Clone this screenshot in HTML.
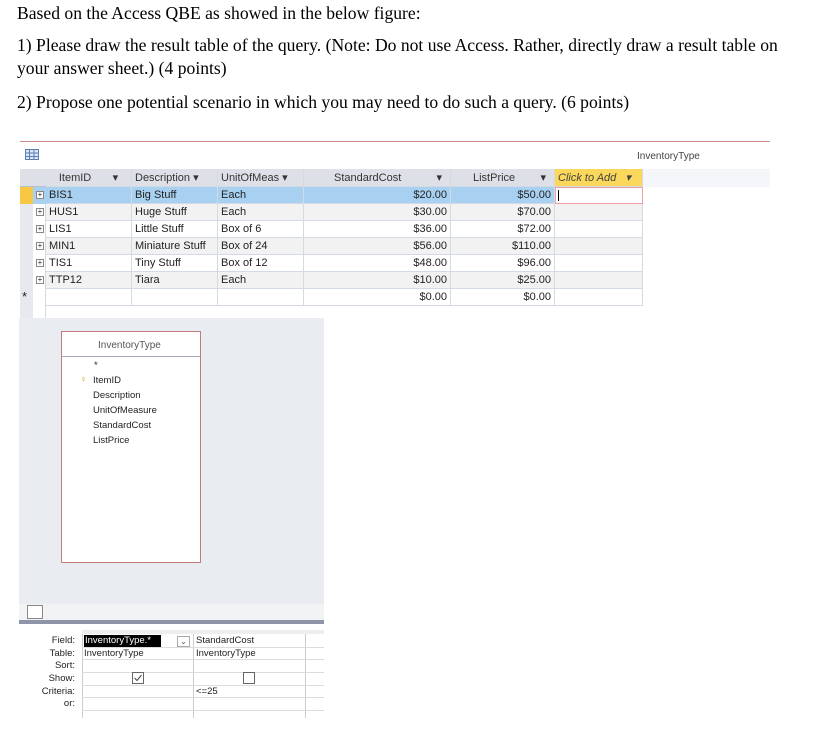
<!DOCTYPE html>
<html><head><meta charset="utf-8"><style>
*{margin:0;padding:0;box-sizing:border-box}
body{width:827px;height:734px;background:#fff;position:relative;overflow:hidden;font-family:"Liberation Sans",sans-serif}
.t{position:absolute;left:17px;font-family:"Liberation Serif",serif;font-size:17.6px;color:#000;white-space:nowrap}
.a{position:absolute;white-space:nowrap;font-size:11px;color:#222}
.c{position:absolute;height:17px;line-height:17px;font-size:11px;color:#222;padding:0 3px;white-space:nowrap;overflow:hidden;border-right:1px solid #d4dae3;border-bottom:1px solid #d4dae3}
.r{text-align:right}
.ex{position:absolute;width:8px;height:8px;border:1px solid #888;font-size:8px;line-height:6px;text-align:center;color:#333;background:#fff}
.q{position:absolute;font-size:9.5px;color:#222;white-space:nowrap}
</style></head><body>
<div class="t" style="top:3px">Based on the Access QBE as showed in the below figure:</div>
<div class="t" style="top:35px">1) Please draw the result table of the query. (Note: Do not use Access. Rather, directly draw a result table on</div>
<div class="t" style="top:58px">your answer sheet.) (4 points)</div>
<div class="t" style="top:92px">2) Propose one potential scenario in which you may need to do such a query. (6 points)</div>

<div style="position:absolute;left:20px;top:141px;width:750px;height:1px;background:#c98a8a"></div>
<svg style="position:absolute;left:25px;top:149px" width="14" height="11"><rect x="0.5" y="0.5" width="13" height="10" fill="#dbe6f5" stroke="#5b7fb5"/><path d="M0 4H14M0 7.5H14M4.5 1V11M9 1V11" stroke="#5b7fb5"/></svg>
<div class="a" style="left:637px;top:151px;font-size:10px;color:#444">InventoryType</div>

<div style="position:absolute;left:20px;top:169px;width:750px;height:18px;background:#f4f6fa"></div>
<div style="position:absolute;left:20px;top:169px;width:622px;height:18px;background:#dde1e7;border-bottom:1px solid #b8c0cc"></div>
<div class="c" style="left:46px;top:169px;width:86px;text-align:center;height:18px;line-height:18px;color:#333">ItemID&nbsp;&nbsp;&nbsp;&nbsp;&nbsp;&nbsp;&nbsp;▾</div>
<div class="c" style="left:132px;top:169px;width:86px;height:18px;line-height:18px;color:#333">Description ▾</div>
<div class="c" style="left:218px;top:169px;width:86px;height:18px;line-height:18px;color:#333">UnitOfMeas ▾</div>
<div class="c" style="left:304px;top:169px;width:147px;height:18px;line-height:18px;color:#333;padding-left:30px">StandardCost<span style="position:absolute;right:8px">▾</span></div>
<div class="c" style="left:451px;top:169px;width:104px;height:18px;line-height:18px;color:#333;padding-left:22px">ListPrice<span style="position:absolute;right:8px">▾</span></div>
<div class="c" style="left:555px;top:169px;width:88px;height:18px;line-height:18px;background:#fbd75b;font-style:italic;color:#444">Click to Add&nbsp;&nbsp; ▾</div>

<div style="position:absolute;left:20px;top:187px;width:13px;height:17px;background:#f8c844"></div>
<div style="position:absolute;left:20px;top:204px;width:13px;height:118px;background:#e6e9ee"></div>
<div style="position:absolute;left:33px;top:187px;width:609px;height:17px;background:#a8d0f1"></div>
<div style="position:absolute;left:33px;top:204px;width:13px;height:118px;background:#fff;border-right:1px solid #d4dae3"></div>

<div id="rows"></div>
<div class="a" style="left:22px;top:289px;font-size:13px">*</div>
<div style="position:absolute;left:555px;top:187px;width:88px;height:17px;border:1px solid #f0a0a0;background:#fff"></div>
<div style="position:absolute;left:558px;top:190px;width:1px;height:11px;background:#000"></div>

<div style="position:absolute;left:19px;top:318px;width:305px;height:286px;background:#e9ecf0"></div>
<div style="position:absolute;left:61px;top:331px;width:140px;height:232px;background:#fff;border:1px solid #c77a7a"></div>
<div style="position:absolute;left:62px;top:356px;width:138px;height:1px;background:#aab"></div>
<div class="q" style="left:98px;top:340px;color:#555;font-size:10px">InventoryType</div>
<div class="q" style="left:94px;top:360px">*</div>
<div class="q" style="left:80px;top:374px;color:#b89a10;font-size:9px">♀</div>
<div class="q" style="left:93px;top:375px">ItemID</div>
<div class="q" style="left:93px;top:390px">Description</div>
<div class="q" style="left:93px;top:405px">UnitOfMeasure</div>
<div class="q" style="left:93px;top:420px">StandardCost</div>
<div class="q" style="left:93px;top:435px">ListPrice</div>
<div style="position:absolute;left:19px;top:604px;width:305px;height:16px;background:#f2f3f5"></div>
<div style="position:absolute;left:27px;top:605px;width:16px;height:14px;border:1px solid #888;background:#fff"></div>
<div style="position:absolute;left:19px;top:620px;width:305px;height:4px;background:#8f95a8"></div>

<div style="position:absolute;left:82px;top:630px;width:1px;height:88px;background:#ccc"></div>
<div style="position:absolute;left:193px;top:630px;width:1px;height:88px;background:#ccc"></div>
<div style="position:absolute;left:305px;top:630px;width:1px;height:88px;background:#ccc"></div>
<div style="position:absolute;left:82px;top:630px;width:242px;height:4px;background:#eceef2"></div>
<div id="grid"></div>
<div style="position:absolute;left:84px;top:635px;width:77px;height:12px;background:#000"></div>
<div class="q" style="left:85px;top:635px;color:#fff">InventoryType.*</div>
<div style="position:absolute;left:177px;top:636px;width:13px;height:11px;border:1px solid #aaa;font-size:8px;text-align:center;line-height:9px;color:#555">⌄</div>
<div class="q" style="left:196px;top:635px">StandardCost</div>
<div class="q" style="left:84px;top:648px">InventoryType</div>
<div class="q" style="left:196px;top:648px">InventoryType</div>
<svg style="position:absolute;left:132px;top:672px" width="12" height="12"><rect x="0.5" y="0.5" width="11" height="11" fill="#fff" stroke="#666"/><path d="M2.5 6L5 8.5L9.5 3" stroke="#444" fill="none"/></svg>
<div style="position:absolute;left:243px;top:672px;width:12px;height:12px;border:1px solid #666"></div>
<div class="q" style="left:196px;top:686px">&lt;=25</div>
<div class="q" style="right:752px;top:635px;text-align:right">Field:</div>
<div class="q" style="right:752px;top:648px">Table:</div>
<div class="q" style="right:752px;top:660px">Sort:</div>
<div class="q" style="right:752px;top:673px">Show:</div>
<div class="q" style="right:752px;top:686px">Criteria:</div>
<div class="q" style="right:752px;top:698px">or:</div>

<script>
var d=[["BIS1","Big Stuff","Each","$20.00","$50.00"],["HUS1","Huge Stuff","Each","$30.00","$70.00"],["LIS1","Little Stuff","Box of 6","$36.00","$72.00"],["MIN1","Miniature Stuff","Box of 24","$56.00","$110.00"],["TIS1","Tiny Stuff","Box of 12","$48.00","$96.00"],["TTP12","Tiara","Each","$10.00","$25.00"],["","","","$0.00","$0.00"]];
var h="";
for(var i=0;i<d.length;i++){var y=187+i*17,bg=i==0?"":(i%2==1?"background:#f2f2f2;":"background:#fff;");
if(d[i][0])h+='<div class="ex" style="left:36px;top:'+(y+4)+'px">+</div>';
h+='<div class="c" style="'+bg+'left:46px;top:'+y+'px;width:86px">'+d[i][0]+'</div>';
h+='<div class="c" style="'+bg+'left:132px;top:'+y+'px;width:86px">'+d[i][1]+'</div>';
h+='<div class="c" style="'+bg+'left:218px;top:'+y+'px;width:86px">'+d[i][2]+'</div>';
h+='<div class="c r" style="'+bg+'left:304px;top:'+y+'px;width:147px">'+d[i][3]+'</div>';
h+='<div class="c r" style="'+bg+'left:451px;top:'+y+'px;width:104px">'+d[i][4]+'</div>';
if(i>0)h+='<div class="c" style="'+bg+'left:555px;top:'+y+'px;width:88px"></div>';}
document.getElementById("rows").innerHTML=h;
var g="";[647,659,672,685,697,710].forEach(function(y){g+='<div style="position:absolute;left:82px;top:'+y+'px;width:242px;height:1px;background:#ddd"></div>'});
document.getElementById("grid").innerHTML=g;
</script>
</body></html>
